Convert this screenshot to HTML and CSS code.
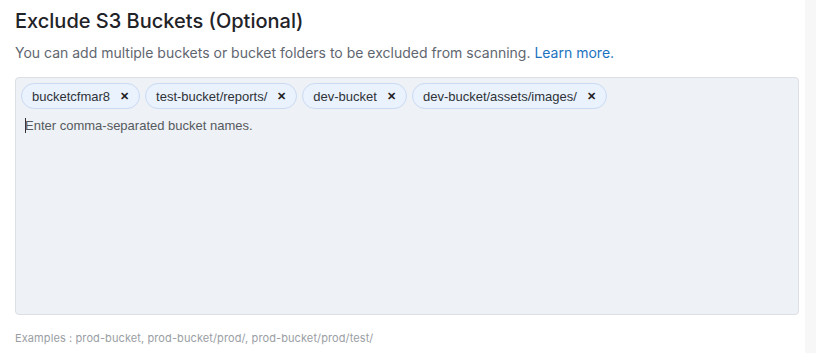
FILE: index.html
```html
<!DOCTYPE html>
<html lang="en">
  <head>
    <meta charset="UTF-8" />
    <title>Exclude S3 Buckets</title>
    <link rel="stylesheet" href="styles.css">
  </head>
  <body>
    <div class="page">
      <div class="panel">
        <h2 class="title">Exclude S3 Buckets (Optional)</h2>
        <p class="subtitle">
          You can add multiple buckets or bucket folders to be excluded from scanning.
          <a href="#">Learn more.</a>
        </p>

        <div class="tag-box">
          <div class="tags">
            <span class="tag">bucketcfmar8 <span class="tag-x">&#x2715;</span></span>
            <span class="tag">test-bucket/reports/ <span class="tag-x">&#x2715;</span></span>
            <span class="tag">dev-bucket <span class="tag-x">&#x2715;</span></span>
            <span class="tag">dev-bucket/assets/images/ <span class="tag-x">&#x2715;</span></span>
          </div>
          <div class="tag-input"><span class="caret"></span>Enter comma-separated bucket names.</div>
        </div>

        <p class="hint">Examples : prod-bucket, prod-bucket/prod/, prod-bucket/prod/test/</p>
      </div>
      <div class="scroll-strip"></div>
    </div>
  </body>
</html>
```

FILE: styles.css
```css
body {
  margin: 0;
  background: #fff;
  font-family: Inter, "Liberation Sans", sans-serif;
}

.page {
  display: flex;
  height: 353px;
  overflow: hidden;
}

.panel {
  flex: 1;
  padding: 8px 6px 0 15px;
}

.scroll-strip {
  width: 11px;
  background: #f7f7f7;
}

.title {
  margin: 0;
  font-size: 20px;
  font-weight: 500;
  color: #1f2328;
  line-height: 26px;
}

.subtitle {
  margin: 9px 0 0;
  font-size: 14px;
  color: #5f6670;
  line-height: 20px;
}

.subtitle a {
  color: #1a73c0;
  text-decoration: none;
}

.tag-box {
  margin-top: 14px;
  height: 231px;
  background: #eef1f5;
  border: 1px solid #dcdfe3;
  border-radius: 4px;
  padding: 5px 5px 0 5px;
}

.tags {
  display: flex;
  gap: 5px;
}

.tag {
  display: inline-flex;
  align-items: center;
  height: 24px;
  padding: 0 10px;
  border: 1px solid #c9daf3;
  background: #eaf2fd;
  border-radius: 13px;
  font-family: "Liberation Sans", Arial, sans-serif;
  font-size: 13px;
  color: #2f3338;
}

.tag-x {
  margin-left: 10px;
  font-size: 11px;
  font-weight: bold;
  color: #222;
}

.tag-input {
  margin: 9px 0 0 4px;
  font-family: "Liberation Sans", Arial, sans-serif;
  font-size: 13px;
  color: #555a60;
  display: flex;
  align-items: center;
}

.caret {
  width: 1px;
  height: 15px;
  background: #333;
  margin-right: -1px;
}

.hint {
  margin: 16px 0 0;
  font-size: 11px;
  letter-spacing: 0.1px;
  color: #9a9ea4;
}
```
